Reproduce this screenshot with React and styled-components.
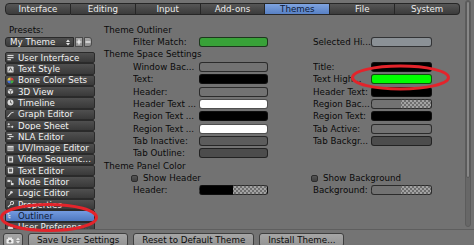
import React from 'react'
import styled, { createGlobalStyle } from 'styled-components'

const Global = createGlobalStyle`
  html, body { margin: 0; padding: 0; background: #727272; }
  * { box-sizing: border-box; }
`

const ROW = 12.35

const Page = styled.div`
  position: relative;
  width: 474px;
  height: 245px;
  overflow: hidden;
  display: flex;
  flex-direction: column;
  background: #727272;
  font-family: "DejaVu Sans", "Liberation Sans", sans-serif;
  font-size: 8.7px;
  color: #0a0a0a;
`

const Main = styled.div`
  flex: 1;
  min-height: 0;
  display: flex;
`

const Region = styled.div`
  flex: 1;
  display: flex;
  flex-direction: column;
  padding: 3px 0 0 5px;
  min-width: 0;
`

const TabBar = styled.div`
  display: flex;
  width: 455px;
  height: 12px;
`

const Tab = styled.div`
  flex: 1;
  display: flex;
  align-items: center;
  justify-content: center;
  color: ${p => (p.$active ? '#0d1a36' : '#ececec')};
  background: ${p => (p.$active ? 'linear-gradient(#7ea3e0, #5880c4)' : 'linear-gradient(#565656, #3b3b3b)')};
  border: 1px solid #262626;
  border-left-width: 0;
  &:first-child { border-left-width: 1px; border-radius: 4px 0 0 4px; }
  &:last-child { border-radius: 0 4px 4px 0; }
`

const Body = styled.div`
  flex: 1;
  display: flex;
  gap: 9px;
  min-height: 0;
  overflow: hidden;
`

const Sidebar = styled.div`
  width: 90px;
  display: flex;
  flex-direction: column;
  padding-top: 8.8px;
`

const SideLabel = styled.div`
  height: ${ROW}px;
  line-height: ${ROW}px;
  padding-left: 4px;
`

const PresetRow = styled.div`
  display: flex;
  height: 10px;
  margin-top: 1px;
  gap: 1px;
`

const Dropdown = styled.div`
  width: 69px;
  display: flex;
  align-items: center;
  justify-content: space-between;
  padding: 0 3px 0 4px;
  color: #f0f0f0;
  background: linear-gradient(#4e4e4e, #3b3b3b);
  border: 1px solid #2a2a2a;
  border-radius: 3px 0 0 3px;
`

const SmallBtn = styled.div`
  width: 8px;
  display: flex;
  align-items: center;
  justify-content: center;
  background: linear-gradient(#a4a4a4, #8e8e8e);
  border: 1px solid #4a4a4a;
  border-radius: ${p => (p.$last ? '0 3px 3px 0' : '0')};
`

const List = styled.div`
  margin-top: 5px;
  display: flex;
  flex-direction: column;
`

const Item = styled.div`
  height: 11.3px;
  display: flex;
  align-items: center;
  gap: 4px;
  padding-left: 1px;
  white-space: nowrap;
  overflow: hidden;
  color: ${p => (p.$selected ? '#0d1a36' : '#f2f2f2')};
  background: ${p => (p.$selected ? 'linear-gradient(#739be0, #4e78c0)' : 'linear-gradient(#505050, #393939)')};
  border: 1px solid #2a2a2a;
  border-radius: 2px;
`

const Content = styled.div`
  flex: 1;
  display: flex;
  flex-direction: column;
  padding-top: 8.8px;
`

const SectionTitle = styled.div`
  height: ${ROW}px;
  line-height: ${ROW}px;
  white-space: nowrap;
`

const Columns = styled.div`
  display: grid;
  grid-template-columns: 180px 1fr;
`

const Column = styled.div`
  display: flex;
  flex-direction: column;
`

const Row = styled.div`
  height: ${ROW}px;
  display: flex;
  align-items: center;
  padding-left: ${p => p.$indent}px;
  white-space: nowrap;
`

const Label = styled.span`
  width: ${p => p.$w}px;
  overflow: hidden;
`

const Swatch = styled.div`
  width: ${p => p.$w}px;
  height: 10px;
  border: 1px solid rgba(20, 20, 20, 0.75);
  border-radius: 3px;
  background: ${p =>
    p.$alpha
      ? `linear-gradient(90deg, ${p.$color} 50%, transparent 50%), repeating-conic-gradient(#a2a2a2 0 25%, #6e6e6e 0 50%) 0 0 / 4px 4px`
      : p.$color};
`

const Check = styled.div`
  width: 7px;
  height: 7px;
  margin-right: 5px;
  border-radius: 2px;
  background: linear-gradient(#555, #404040);
  border: 1px solid #2c2c2c;
`

const Scrollbar = styled.div`
  width: 6px;
  margin: 0 3px 2px 4px;
  display: flex;
  flex-direction: column;
  border-radius: 3px;
  background: #676767;
  border: 1px solid #5c5c5c;
`

const Thumb = styled.div`
  height: 177px;
  border-radius: 3px;
  background: linear-gradient(90deg, #7e7e7e, #929292, #7e7e7e);
  border: 1px solid #5a5a5a;
`

const BottomBar = styled.div`
  height: 16px;
  display: flex;
  gap: 5px;
  padding: 3px 0 0 3px;
  background: #747474;
  border-top: 1px solid #5e5e5e;
`

const Button = styled.div`
  height: 14px;
  display: flex;
  align-items: center;
  padding: 0 ${p => (p.$icon ? 2 : 8)}px;
  gap: 2px;
  white-space: nowrap;
  background: linear-gradient(#a6a6a6, #939393);
  border: 1px solid #3f3f3f;
  border-radius: 3px;
  margin-right: ${p => p.$mr || 0}px;
`

const Overlay = styled.svg`
  position: absolute;
  left: 0;
  top: 0;
  pointer-events: none;
`

const ic = '#d9d9d9'

function Icon({ name }) {
  const shapes = {
    ui: <><rect x="0.5" y="1" width="7" height="1.4" fill={ic} /><rect x="0.5" y="3.4" width="7" height="1.4" fill={ic} /><rect x="0.5" y="5.8" width="4" height="1.4" fill={ic} /></>,
    text: <><rect x="0.5" y="0.5" width="7" height="7" rx="1" fill={ic} /><path d="M2 6 L4 2 L6 6" stroke="#444" strokeWidth="1" fill="none" /></>,
    bone: <><path d="M4 4 L4 0.5 A3.5 3.5 0 0 1 7.5 4 Z" fill="#e04040" /><path d="M4 4 L7.5 4 A3.5 3.5 0 0 1 4 7.5 Z" fill="#40b040" /><path d="M4 4 L4 7.5 A3.5 3.5 0 0 1 0.5 4 Z" fill="#4070e0" /><path d="M4 4 L0.5 4 A3.5 3.5 0 0 1 4 0.5 Z" fill="#e0c040" /></>,
    view: <><path d="M1 2.2 L4 0.8 L7 2.2 L7 5.8 L4 7.2 L1 5.8 Z" fill={ic} /><path d="M1 2.2 L4 3.6 L7 2.2 M4 3.6 L4 7.2" stroke="#555" strokeWidth="0.8" fill="none" /></>,
    time: <><circle cx="4" cy="4" r="3.4" fill={ic} /><path d="M4 1.8 L4 4 L5.8 4.8" stroke="#444" strokeWidth="0.9" fill="none" /></>,
    graph: <path d="M0.5 6.5 C3 6.5 2.5 1.5 7.5 1.5" stroke={ic} strokeWidth="1.2" fill="none" />,
    dope: <><path d="M2 1 L3.5 2.5 L2 4 L0.5 2.5 Z" fill={ic} /><path d="M6 4 L7.5 5.5 L6 7 L4.5 5.5 Z" fill={ic} /><path d="M0.5 5.5 L4 5.5" stroke={ic} /></>,
    nla: <><rect x="0.5" y="1" width="5" height="1.4" fill={ic} /><rect x="2.5" y="3.4" width="5" height="1.4" fill={ic} /><rect x="0.5" y="5.8" width="4" height="1.4" fill={ic} /></>,
    image: <><rect x="0.5" y="1" width="7" height="6" fill={ic} /><rect x="0.5" y="3" width="7" height="1" fill="#666" /><rect x="0.5" y="5" width="7" height="1" fill="#666" /></>,
    seq: <><rect x="1" y="0.5" width="6" height="7" fill={ic} /><rect x="2.5" y="2" width="3" height="4" fill="#555" /></>,
    texted: <><rect x="1" y="0.5" width="6" height="7" rx="0.8" fill={ic} /><rect x="2.3" y="2" width="3.4" height="3.6" fill="#666" /></>,
    node: <><rect x="0.5" y="1" width="3" height="2.5" fill={ic} /><rect x="4.5" y="4.5" width="3" height="2.5" fill={ic} /><path d="M3.5 2.2 L5 2.2 L5 4.5" stroke={ic} fill="none" /></>,
    logic: <><circle cx="5" cy="2.5" r="1.5" fill={ic} /><path d="M4.5 3.5 L1.5 6.5" stroke={ic} strokeWidth="1.2" /></>,
    props: <path d="M1 7 L4.5 3.5 M4.2 3 A1.8 1.8 0 1 1 5 3.8" stroke={ic} strokeWidth="1.2" fill="none" />,
    outliner: <><rect x="0.5" y="1" width="2" height="1.4" fill={ic} /><rect x="2" y="3.4" width="2" height="1.4" fill={ic} /><rect x="2" y="5.8" width="2" height="1.4" fill={ic} /><path d="M1.5 2.4 L1.5 6.5" stroke={ic} strokeWidth="0.7" /></>,
    prefs: <><rect x="1" y="3" width="6" height="3" fill={ic} /><rect x="2.2" y="1" width="1" height="2" fill={ic} /><rect x="4.8" y="1" width="1" height="2" fill={ic} /></>,
  }
  return (
    <svg width="7" height="7" viewBox="0 0 8 8" style={{ flex: 'none' }}>
      {shapes[name]}
    </svg>
  )
}

const tabs = ['Interface', 'Editing', 'Input', 'Add-ons', 'Themes', 'File', 'System']

const editors = [
  ['ui', 'User Interface'],
  ['text', 'Text Style'],
  ['bone', 'Bone Color Sets'],
  ['view', '3D View'],
  ['time', 'Timeline'],
  ['graph', 'Graph Editor'],
  ['dope', 'Dope Sheet'],
  ['nla', 'NLA Editor'],
  ['image', 'UV/Image Editor'],
  ['seq', 'Video Sequenc...'],
  ['texted', 'Text Editor'],
  ['node', 'Node Editor'],
  ['logic', 'Logic Editor'],
  ['props', 'Properties'],
  ['outliner', 'Outliner'],
  ['prefs', 'User Preferenc...'],
]

const G = '#727272'

const spaceLeft = [
  ['Window Bac...', G],
  ['Text:', '#000'],
  ['Header:', G],
  ['Header Text ...', '#fff'],
  ['Region Text ...', '#000'],
  ['Region Text ...', '#fff'],
  ['Tab Inactive:', '#5c5c5c'],
  ['Tab Outline:', '#4c4c4c'],
]

const spaceRight = [
  ['Title:', '#000'],
  ['Text High...', '#00ff00'],
  ['Header Text:', '#000'],
  ['Region Bac...', G, true],
  ['Region Text:', '#000'],
  ['Tab Active:', G],
  ['Tab Backgr...', '#4c4c4c'],
]

function ColorRow({ side, label, color, alpha }) {
  const left = side === 'left'
  return (
    <Row $indent={29}>
      <Label $w={left ? 66 : 58}>{label}</Label>
      <Swatch $w={left ? 69 : 61} $color={color} $alpha={alpha} />
    </Row>
  )
}

function UpDown() {
  return (
    <svg width="4" height="7" viewBox="0 0 4 7">
      <path d="M0 3 L2 0.5 L4 3 Z M0 4 L2 6.5 L4 4 Z" fill="#e6e6e6" />
    </svg>
  )
}

export default function App() {
  return (
    <Page>
      <Global />
      <Main>
        <Region>
          <TabBar>
            {tabs.map(t => (
              <Tab key={t} $active={t === 'Themes'}>{t}</Tab>
            ))}
          </TabBar>
          <Body>
            <Sidebar>
              <SideLabel>Presets:</SideLabel>
              <PresetRow>
                <Dropdown>
                  <span>My Theme</span>
                  <UpDown />
                </Dropdown>
                <SmallBtn>
                  <svg width="6" height="6" viewBox="0 0 6 6"><path d="M3 0.5 V5.5 M0.5 3 H5.5" stroke="#f4f4f4" strokeWidth="1.2" /></svg>
                </SmallBtn>
                <SmallBtn $last>
                  <svg width="6" height="6" viewBox="0 0 6 6"><path d="M0.5 3 H5.5" stroke="#f4f4f4" strokeWidth="1.2" /></svg>
                </SmallBtn>
              </PresetRow>
              <List>
                {editors.map(([icon, name]) => (
                  <Item key={name} $selected={name === 'Outliner'}>
                    <Icon name={icon} />
                    <span>{name}</span>
                  </Item>
                ))}
              </List>
            </Sidebar>
            <Content>
              <SectionTitle>Theme Outliner</SectionTitle>
              <Columns>
                <Column>
                  <ColorRow side="left" label="Filter Match:" color="#38a238" />
                </Column>
                <Column>
                  <ColorRow side="right" label="Selected Hi..." color="#8b9196" />
                </Column>
              </Columns>
              <SectionTitle>Theme Space Settings</SectionTitle>
              <Columns>
                <Column>
                  {spaceLeft.map(([l, c], i) => (
                    <ColorRow key={i} side="left" label={l} color={c} />
                  ))}
                </Column>
                <Column>
                  {spaceRight.map(([l, c, a], i) => (
                    <ColorRow key={i} side="right" label={l} color={c} alpha={a} />
                  ))}
                </Column>
              </Columns>
              <SectionTitle>Theme Panel Color</SectionTitle>
              <Columns>
                <Column>
                  <Row $indent={27}><Check />Show Header</Row>
                  <ColorRow side="left" label="Header:" color="#000" alpha />
                </Column>
                <Column>
                  <Row $indent={27}><Check />Show Background</Row>
                  <ColorRow side="right" label="Background:" color={G} alpha />
                </Column>
              </Columns>
            </Content>
          </Body>
        </Region>
        <Scrollbar>
          <Thumb />
        </Scrollbar>
      </Main>
      <BottomBar>
        <Button $icon>
          <svg width="8" height="7" viewBox="0 0 8 7">
            <rect x="0.5" y="2" width="7" height="4.5" rx="0.8" fill="#eee" />
            <rect x="2" y="0.5" width="4" height="2" fill="#eee" />
            <circle cx="4" cy="4.2" r="1.3" fill="#777" />
          </svg>
          <UpDown />
        </Button>
        <Button>Save User Settings</Button>
        <Button>Reset to Default Theme</Button>
        <Button>Install Theme...</Button>
      </BottomBar>
      <Overlay width="474" height="245" viewBox="0 0 474 245">
        <ellipse cx="49" cy="217.5" rx="47.5" ry="13" fill="none" stroke="#e3242b" strokeWidth="3" />
        <ellipse cx="400.5" cy="77.5" rx="48" ry="11.5" fill="none" stroke="#e3242b" strokeWidth="3" />
      </Overlay>
    </Page>
  )
}
